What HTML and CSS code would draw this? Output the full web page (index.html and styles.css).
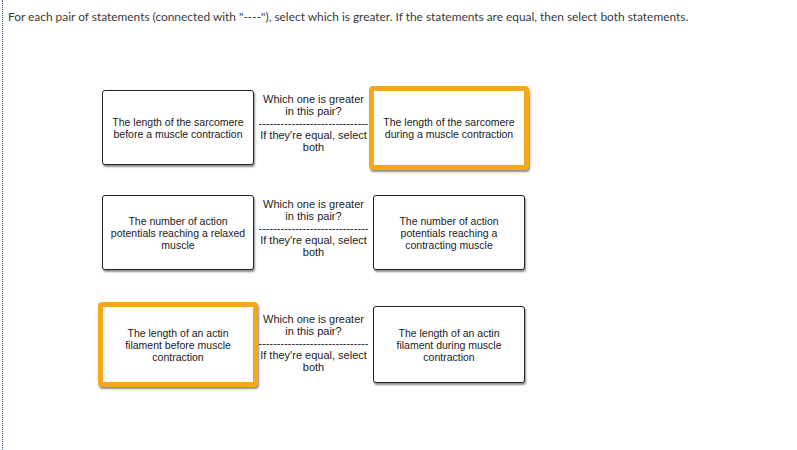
FILE: index.html
```html
<!DOCTYPE html>
<html lang="en">
<head>
<meta charset="utf-8">
<title>Compare statements</title>
<link rel="stylesheet" href="styles.css">
</head>
<body>
<div class="page">
  <p class="prompt">For each pair of statements (connected with "----"), select which is greater. If the statements are equal, then select both statements.</p>

  <div class="pairs">
    <div class="pair pair-1">
      <div class="card">The length of the sarcomere before a muscle contraction</div>
      <div class="link">Which one is greater in this pair?<br><span class="dash">------------------------------</span><br>If they're equal, select both</div>
      <div class="card selected">The length of the sarcomere during a muscle contraction</div>
    </div>

    <div class="pair pair-2">
      <div class="card">The number of action potentials reaching a relaxed muscle</div>
      <div class="link">Which one is greater in this pair?<br><span class="dash">------------------------------</span><br>If they're equal, select both</div>
      <div class="card">The number of action potentials reaching a contracting muscle</div>
    </div>

    <div class="pair pair-3">
      <div class="card selected">The length of an actin filament before muscle contraction</div>
      <div class="link">Which one is greater in this pair?<br><span class="dash">------------------------------</span><br>If they're equal, select both</div>
      <div class="card">The length of an actin filament during muscle contraction</div>
    </div>
  </div>
</div>
</body>
</html>
```

FILE: styles.css
```css
html, body {
  margin: 0;
  padding: 0;
  background: #ffffff;
}

body {
  padding-left: 2px;
}

.page {
  min-height: 450px;
  border-left: 1px dotted #44587a;
  padding-left: 5px;
  box-sizing: border-box;
}

.prompt {
  margin: 0;
  padding-top: 10px;
  font-family: "Lato", "Open Sans", sans-serif;
  font-size: 11.9px;
  line-height: 14px;
  color: #3a3a3a;
}

.pairs {
  margin-left: 94px;
  padding-top: 66px;
  display: flex;
  flex-direction: column;
}

.pair {
  display: flex;
  align-items: flex-start;
}

.pair-2 {
  margin-top: 29px;
}

.pair-3 {
  margin-top: 36px;
}

.card {
  width: 152px;
  height: 75px;
  box-sizing: border-box;
  border: 1px solid #222;
  border-radius: 3px;
  background: #fff;
  box-shadow: 1px 2px 2px rgba(0, 0, 0, 0.45);
  display: flex;
  align-items: center;
  justify-content: center;
  text-align: center;
  padding: 0 6px;
  font-family: "Liberation Sans", Arial, sans-serif;
  font-size: 10.5px;
  line-height: 12px;
  color: #1a1a1a;
}

.pair-3 .card {
  height: 77px;
}

.card.selected {
  border: 5px solid #f7a818;
  border-radius: 4px;
  margin: -4px;
  width: 160px;
  height: 84px;
  padding: 0 8px;
}

.pair-3 .card.selected {
  height: 85px;
}

.link {
  width: 119px;
  box-sizing: border-box;
  flex: none;
  padding: 3px 4px 0;
  text-align: center;
  font-family: "Liberation Sans", Arial, sans-serif;
  font-size: 11px;
  line-height: 12px;
  color: #222;
}

.pair-3 .link {
  padding-top: 7px;
}

.dash {
  white-space: nowrap;
}
```
